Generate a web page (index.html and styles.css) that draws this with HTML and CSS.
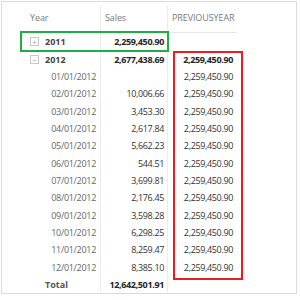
FILE: index.html
```html
<!DOCTYPE html>
<html>
<head>
<meta charset="utf-8">
<link rel="stylesheet" href="styles.css">
</head>
<body>
<div class="frame">
  <div class="table">
    <div class="hd c1">Year</div>
    <div class="hd c2">Sales</div>
    <div class="hd c3">PREVIOUSYEAR</div>

    <div class="c1 yr"><span class="box">+</span>2011</div>
    <div class="c2 b">2,259,450.90</div>
    <div class="c3"></div>

    <div class="c1 yr"><span class="box">−</span>2012</div>
    <div class="c2 b">2,677,438.69</div>
    <div class="c3 b">2,259,450.90</div>

    <div class="c1 d">01/01/2012</div><div class="c2"></div><div class="c3">2,259,450.90</div>
    <div class="c1 d">02/01/2012</div><div class="c2">10,006.66</div><div class="c3">2,259,450.90</div>
    <div class="c1 d">03/01/2012</div><div class="c2">3,453.30</div><div class="c3">2,259,450.90</div>
    <div class="c1 d">04/01/2012</div><div class="c2">2,617.84</div><div class="c3">2,259,450.90</div>
    <div class="c1 d">05/01/2012</div><div class="c2">5,662.23</div><div class="c3">2,259,450.90</div>
    <div class="c1 d">06/01/2012</div><div class="c2">544.51</div><div class="c3">2,259,450.90</div>
    <div class="c1 d">07/01/2012</div><div class="c2">3,699.81</div><div class="c3">2,259,450.90</div>
    <div class="c1 d">08/01/2012</div><div class="c2">2,176.45</div><div class="c3">2,259,450.90</div>
    <div class="c1 d">09/01/2012</div><div class="c2">3,598.28</div><div class="c3">2,259,450.90</div>
    <div class="c1 d">10/01/2012</div><div class="c2">6,298.25</div><div class="c3">2,259,450.90</div>
    <div class="c1 d">11/01/2012</div><div class="c2">8,259.47</div><div class="c3">2,259,450.90</div>
    <div class="c1 d">12/01/2012</div><div class="c2">8,385.10</div><div class="c3">2,259,450.90</div>

    <div class="c1 tot">Total</div>
    <div class="c2 b">12,642,501.91</div>
    <div class="c3"></div>
  </div>
  <div class="mark green"></div>
  <div class="mark red"></div>
</div>
</body>
</html>
```

FILE: styles.css
```css
html, body {
  margin: 0;
  padding: 0;
  background: #fff;
}
body {
  font-family: "Open Sans", "Noto Sans", sans-serif;
  font-size: 9px;
  color: #333;
}
.frame {
  position: relative;
  margin: 1px;
  width: 294px;
  height: 291px;
  border: 1px solid #dcdcdc;
}
.table {
  display: grid;
  grid-template-columns: 79px 67px 70px;
  grid-template-rows: 28.33px;
  grid-auto-rows: 17.33px;
  padding: 3px 0 0 19px;
}
.table > div {
  line-height: 17.33px;
  white-space: nowrap;
}
.table > .hd {
  height: 28.33px;
  line-height: 12px;
  padding-top: 7px;
  box-sizing: border-box;
  color: #7a7a7a;
  border-bottom: 1px solid #e6e6e6;
  letter-spacing: -0.1px;
}
.c1 {
  padding-left: 9px;
}
.c1.d {
  text-align: right;
  padding-right: 4px;
  color: #666;
  letter-spacing: -0.3px;
}
.c2, .c3 {
  border-left: 1px solid #ececec;
  text-align: right;
  letter-spacing: -0.35px;
}
.c2 {
  padding-right: 3px;
}
.c3 {
  padding-right: 4px;
}
.hd.c2, .hd.c3 {
  text-align: left;
  padding-left: 4px;
}
.b {
  font-weight: 700;
  color: #252525;
}
.yr {
  font-weight: 700;
  color: #444;
  display: flex;
  align-items: center;
}
.box {
  display: inline-flex;
  align-items: center;
  justify-content: center;
  width: 7px;
  height: 7px;
  border: 1px solid #c8c8c8;
  color: #aaa;
  font-weight: 400;
  font-size: 8px;
  line-height: 7px;
  margin-right: 6px;
}
.tot {
  font-weight: 700;
  color: #555;
  padding-left: 24px;
}
.mark {
  position: absolute;
  box-sizing: border-box;
  border: 2px solid;
}
.green {
  left: 18px;
  top: 29px;
  width: 149px;
  height: 21px;
  border-color: #1fae45;
}
.red {
  left: 171px;
  top: 49px;
  width: 70px;
  height: 229px;
  border-color: #ec1c24;
}
```
